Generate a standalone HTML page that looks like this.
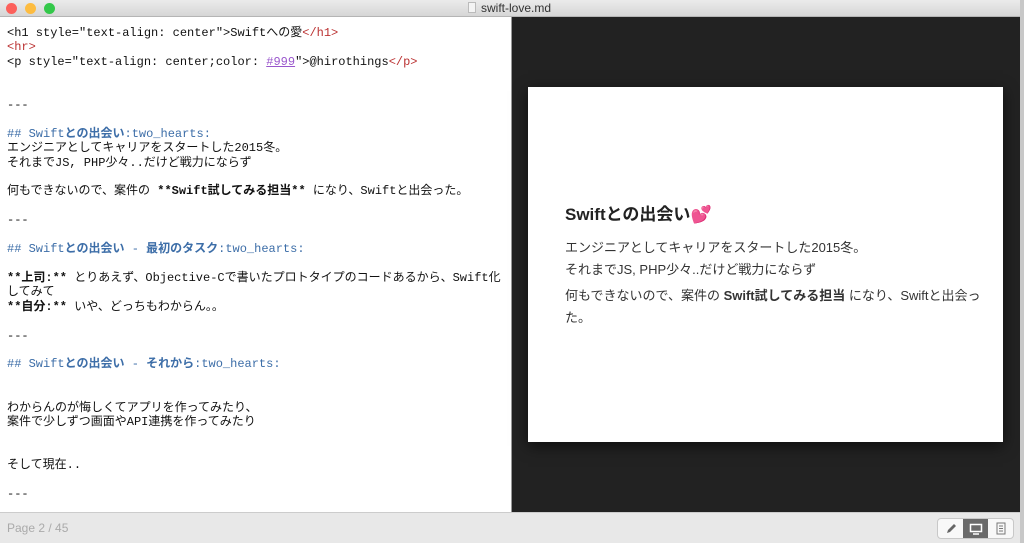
<!DOCTYPE html>
<html><head><meta charset="utf-8"><style>
*{margin:0;padding:0;box-sizing:border-box}
body{width:1024px;height:543px;overflow:hidden;background:#c8c8c8;position:relative;font-family:"Liberation Sans","Noto Sans CJK JP",sans-serif}
.win{position:absolute;left:0;top:0;width:1020px;height:543px;background:#fff;overflow:hidden}
.title{position:absolute;left:0;top:0;width:1020px;height:17px;background:linear-gradient(#ebebeb,#d6d6d6);border-bottom:1px solid #b5b5b5}
.dot{position:absolute;top:3px;width:11px;height:11px;border-radius:50%}
.tt{position:absolute;left:468px;top:1px;font-size:12px;color:#333}
.ed{position:absolute;left:0;top:17px;width:511px;height:495px;background:#fff;font-family:"Liberation Mono","Noto Sans CJK JP",monospace;font-size:12px;color:#111;padding:9px 0 0 7px;line-height:14.4px;white-space:pre}
.r{color:#b33}.h{color:#3d6ea8}.b{font-weight:bold}.u{color:#95c;text-decoration:underline}
.dark{position:absolute;left:511px;top:17px;width:509px;height:495px;background:#222;border-left:1px solid #999}
.card{position:absolute;left:528px;top:87px;width:475px;height:355px;background:#fff;box-shadow:0 4px 14px rgba(0,0,0,.6);padding:116px 0 0 37px;color:#333;font-size:13px;line-height:22px}
.card h2{font-size:17px;font-weight:bold;line-height:24px;margin-bottom:10px;color:#222}
.bar{position:absolute;left:0;top:512px;width:1020px;height:31px;background:#e8e8e8;border-top:1px solid #ccc}
.pg{position:absolute;left:7px;top:8px;font-size:12px;color:#aaa}
.btns{position:absolute;left:937px;top:5px;width:77px;height:21px;border:1px solid #c8c8c8;border-radius:4px;background:#f8f8f8;display:flex;overflow:hidden}
.btns div{flex:1;display:flex;align-items:center;justify-content:center}
</style></head><body>
<div class="win">
<div class="title">
<div class="dot" style="left:6px;background:#fc605b"></div>
<div class="dot" style="left:25px;background:#fdbc40"></div>
<div class="dot" style="left:44px;background:#34c84a"></div>
<div class="tt"><span style="display:inline-block;width:8px;height:11px;background:#f4f4f4;border:1px solid #bbb;vertical-align:-1px;margin-right:5px"></span>swift-love.md</div>
</div>
<div class="ed">&lt;h1 style="text-align: center"&gt;Swiftへの愛<span class="r">&lt;/h1&gt;</span>
<span class="r">&lt;hr&gt;</span>
&lt;p style="text-align: center;color: <span class="u">#999</span>"&gt;@hirothings<span class="r">&lt;/p&gt;</span>


---

<span class="h">## Swift<b>との出会い</b>:two_hearts:</span>
エンジニアとしてキャリアをスタートした2015冬。
それまでJS, PHP少々..だけど戦力にならず

何もできないので、案件の <b>**Swift試してみる担当**</b> になり、Swiftと出会った。

---

<span class="h">## Swift<b>との出会い</b> - <b>最初のタスク</b>:two_hearts:</span>

<b>**上司:**</b> とりあえず、Objective-Cで書いたプロトタイプのコードあるから、Swift化
してみて
<b>**自分:**</b> いや、どっちもわからん。。

---

<span class="h">## Swift<b>との出会い</b> - <b>それから</b>:two_hearts:</span>


わからんのが悔しくてアプリを作ってみたり、
案件で少しずつ画面やAPI連携を作ってみたり


そして現在..

---</div>
<div class="dark"></div>
<div class="card">
<h2>Swiftとの出会い<span style="color:#e06070">💕</span></h2>
<div>エンジニアとしてキャリアをスタートした2015冬。<br>それまでJS, PHP少々..だけど戦力にならず</div>
<div style="margin-top:4px;width:420px">何もできないので、案件の <b>Swift試してみる担当</b> になり、Swiftと出会った。</div>
</div>
<div class="bar">
<div class="pg">Page 2 / 45</div>
<div class="btns">
<div><svg width="12" height="12" viewBox="0 0 12 12"><path d="M2 10 L3 7 L9 1 L11 3 L5 9 Z" fill="#666"/></svg></div>
<div style="background:#6a6a6a"><svg width="14" height="12" viewBox="0 0 14 12"><rect x="1.5" y="1.5" width="11" height="7" fill="none" stroke="#fff" stroke-width="1.5"/><path d="M4 11h6" stroke="#fff" stroke-width="1.5"/></svg></div>
<div><svg width="10" height="13" viewBox="0 0 10 13"><rect x="1" y="1" width="8" height="11" fill="none" stroke="#777"/><path d="M3 4h4M3 6.5h4M3 9h4" stroke="#777"/></svg></div>
</div>
</div>
</div>
</body></html>
